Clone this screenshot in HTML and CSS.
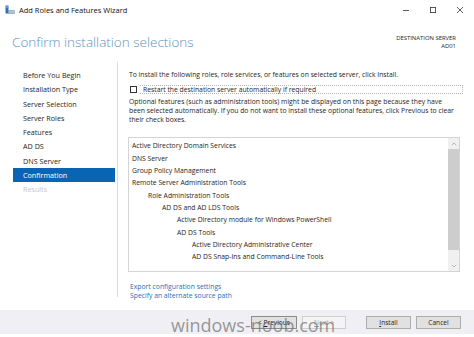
FILE: index.html
```html
<!DOCTYPE html>
<html>
<head>
<meta charset="utf-8">
<link rel="stylesheet" href="styles.css">
</head>
<body>
<div class="window">
  <div class="titlebar">
    <svg class="appicon" width="10" height="10" viewBox="0 0 10 10">
      <rect x="0.5" y="0.5" width="3" height="8" fill="#2f6fb7"/>
      <rect x="1" y="1.5" width="2" height="1" fill="#9fc6ee"/>
      <rect x="3.5" y="5" width="6" height="4" fill="#6f8ea8"/>
      <rect x="4" y="5.5" width="5" height="1.2" fill="#c9d9e6"/>
      <rect x="4" y="7.3" width="5" height="1.2" fill="#c9d9e6"/>
    </svg>
    <span class="title">Add Roles and Features Wizard</span>
    <div class="controls">
      <svg width="8" height="8" viewBox="0 0 8 8"><line x1="1" y1="4.5" x2="7" y2="4.5" stroke="#333" stroke-width="0.8"/></svg>
      <svg width="8" height="8" viewBox="0 0 8 8"><rect x="1.4" y="1.4" width="5.2" height="5.2" fill="none" stroke="#333" stroke-width="0.8"/></svg>
      <svg width="8" height="8" viewBox="0 0 8 8"><path d="M1 1 L7 7 M7 1 L1 7" stroke="#333" stroke-width="0.8"/></svg>
    </div>
  </div>

  <div class="header">
    <h1 class="heading">Confirm installation selections</h1>
    <div class="dest">
      <div>DESTINATION SERVER</div>
      <div>AD01</div>
    </div>
  </div>

  <div class="main">
    <nav class="nav">
      <div class="nav-item">Before You Begin</div>
      <div class="nav-item">Installation Type</div>
      <div class="nav-item">Server Selection</div>
      <div class="nav-item">Server Roles</div>
      <div class="nav-item">Features</div>
      <div class="nav-item">AD DS</div>
      <div class="nav-item">DNS Server</div>
      <div class="nav-item active">Confirmation</div>
      <div class="nav-item disabled">Results</div>
    </nav>

    <div class="content">
      <p class="intro">To install the following roles, role services, or features on selected server, click Install.</p>
      <div class="check-row">
        <span class="checkbox"></span>
        <span class="check-label">Restart the destination server automatically if required</span>
      </div>
      <p class="optional">Optional features (such as administration tools) might be displayed on this page because they have<br>been selected automatically. If you do not want to install these optional features, click Previous to clear<br>their check boxes.</p>

      <div class="listbox">
        <div class="list">
          <div class="li l0">Active Directory Domain Services</div>
          <div class="li l0">DNS Server</div>
          <div class="li l0">Group Policy Management</div>
          <div class="li l0">Remote Server Administration Tools</div>
          <div class="li l1">Role Administration Tools</div>
          <div class="li l2">AD DS and AD LDS Tools</div>
          <div class="li l3">Active Directory module for Windows PowerShell</div>
          <div class="li l3">AD DS Tools</div>
          <div class="li l4">Active Directory Administrative Center</div>
          <div class="li l4">AD DS Snap-Ins and Command-Line Tools</div>
        </div>
        <div class="scrollbar">
          <div class="arrow">
            <svg width="6" height="4" viewBox="0 0 6 4"><path d="M0.8 3.2 L3 1 L5.2 3.2" fill="none" stroke="#a6a6a6" stroke-width="0.8"/></svg>
          </div>
          <div class="track">
            <div class="thumb"></div>
          </div>
          <div class="arrow">
            <svg width="6" height="4" viewBox="0 0 6 4"><path d="M0.8 0.8 L3 3 L5.2 0.8" fill="none" stroke="#a6a6a6" stroke-width="0.8"/></svg>
          </div>
        </div>
      </div>

      <div class="links">
        <a class="link">Export configuration settings</a>
        <a class="link">Specify an alternate source path</a>
      </div>
    </div>
  </div>

  <div class="footer">
    <div class="buttons">
      <span class="btn focus">&lt; <u>P</u>revious</span>
      <span class="btn disabled"><u>N</u>ext &gt;</span>
      <span class="btn gap"><u>I</u>nstall</span>
      <span class="btn">Cancel</span>
    </div>
  </div>
  <div class="bottom-edge"></div>

  <div class="watermark">windows-noob.com</div>
</div>
</body>
</html>
```

FILE: styles.css
```css
* { box-sizing: border-box; }
html, body {
  margin: 0;
  padding: 0;
  background: #ffffff;
}
body {
  width: 474px;
  height: 337px;
  overflow: hidden;
  font-family: "Open Sans", "Noto Sans", sans-serif;
  color: #1e1e1e;
}
.window {
  position: relative;
  width: 474px;
  height: 337px;
  display: flex;
  flex-direction: column;
}

/* title bar */
.titlebar {
  height: 19px;
  display: flex;
  align-items: center;
  padding-left: 5px;
  flex: none;
}
.appicon { flex: none; margin-right: 4px; }
.title {
  font-size: 7.5px;
  color: #111;
}
.controls {
  margin-left: auto;
  display: flex;
  align-items: center;
  gap: 19px;
  padding-right: 10px;
}

/* header */
.header {
  height: 43px;
  flex: none;
  display: flex;
  justify-content: space-between;
  align-items: flex-start;
  padding: 14px 18px 0 12px;
}
.heading {
  margin: 0;
  font-size: 13.5px;
  font-weight: 300;
  color: #5f93ba;
  line-height: 18px;
}
.dest {
  font-size: 5.9px;
  color: #222;
  text-align: right;
  line-height: 8px;
  padding-top: 1px;
}

/* main */
.main {
  flex: none;
  height: 235px;
  display: flex;
}
.nav {
  width: 118px;
  flex: none;
  border-right: 1px solid #dcdcdc;
  padding: 6px 2px 0 13px;
}
.nav-item {
  height: 14.25px;
  line-height: 14.25px;
  font-size: 7.2px;
  padding-left: 10px;
  color: #1e1e1e;
}
.nav-item.active {
  background: #0a64b4;
  color: #ffffff;
}
.nav-item.disabled { color: #c6c6c6; }

.content {
  flex: 1;
  padding: 8px 11px 0 11px;
  font-size: 6.8px;
}
.intro {
  margin: 0;
  line-height: 10px;
}
.check-row {
  margin-top: 5px;
  height: 9px;
  display: flex;
  align-items: center;
}
.checkbox {
  width: 7px;
  height: 7px;
  border: 1px solid #333;
  flex: none;
  margin-left: 1px;
}
.check-label {
  margin-left: 3px;
  flex: 1;
  height: 9px;
  line-height: 8px;
  padding-left: 3px;
  border: 1px dotted #b4b4b4;
  border-left: none;
}
.optional {
  margin: 4px 0 0 0;
  line-height: 8.8px;
  white-space: nowrap;
}

.listbox {
  margin-top: 13px;
  margin-left: -1px;
  width: 332px;
  height: 135px;
  border: 1px solid #d4d4d4;
  display: flex;
}
.list {
  flex: 1;
  padding-top: 2px;
}
.li {
  height: 12.35px;
  line-height: 12.35px;
  white-space: nowrap;
}
.l0 { padding-left: 3px; }
.l1 { padding-left: 19px; }
.l2 { padding-left: 33px; }
.l3 { padding-left: 48px; }
.l4 { padding-left: 63px; }

.scrollbar {
  width: 11px;
  flex: none;
  background: #f0f0f0;
  display: flex;
  flex-direction: column;
}
.arrow {
  height: 11px;
  display: flex;
  align-items: center;
  justify-content: center;
  flex: none;
}
.track {
  flex: 1;
}
.thumb {
  height: 101px;
  background: #cdcdcd;
}

.links {
  margin-top: 10px;
  display: flex;
  flex-direction: column;
  padding-left: 1px;
}
.link {
  color: #1f6fb8;
  line-height: 9px;
  font-size: 6.8px;
}

/* footer */
.footer {
  flex: none;
  height: 24px;
  background: #f0eff3;
  margin-top: 13px;
  display: flex;
  align-items: center;
  justify-content: flex-end;
  padding-right: 13px;
}
.buttons {
  display: flex;
  gap: 5px;
}
.btn {
  width: 45px;
  height: 13px;
  border: 1px solid #adadad;
  background: #e1e1e1;
  font-size: 6.6px;
  line-height: 11px;
  text-align: center;
  color: #1e1e1e;
}
.btn.focus {
  width: 46px;
  border-color: #8c8c8c;
}
.btn.disabled {
  width: 44px;
  background: #f4f4f4;
  border-color: #cfcfcf;
  color: #a8a8a8;
}
.btn.gap { margin-left: 15px; }
.btn u { text-decoration-thickness: 0.5px; text-underline-offset: 1px; }

.bottom-edge { flex: 1; background: #ffffff; }

.watermark {
  position: absolute;
  left: 171px;
  top: 313px;
  font-size: 18px;
  line-height: 24px;
  color: rgba(110, 110, 110, 0.7);
  white-space: nowrap;
}
```
